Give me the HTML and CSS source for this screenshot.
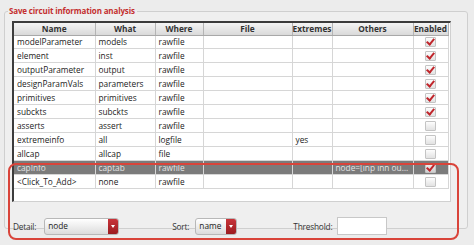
FILE: index.html
```html
<!DOCTYPE html>
<html>
<head>
    <title>Save circuit information analysis</title>
    <meta name="viewport" content="width=device-width, initial-scale=1.0">
    <link rel="stylesheet" href="styles.css">
</head>
<body>
<div class="panel">
    <fieldset class="group">
        <legend class="group-title">Save circuit information analysis</legend>

        <div class="viewport">
            <table class="grid">
                <colgroup>
                    <col class="c-name">
                    <col class="c-what">
                    <col class="c-where">
                    <col class="c-file">
                    <col class="c-ext">
                    <col class="c-others">
                    <col class="c-enabled">
                </colgroup>
                <tr>
                    <th>Name</th><th>What</th><th>Where</th><th>File</th><th>Extremes</th><th>Others</th><th>Enabled</th>
                </tr>
                <tr class="short"><td>modelParameter</td><td>models</td><td>rawfile</td><td></td><td></td><td></td><td class="en"><span class="cb on"></span></td></tr>
                <tr><td>element</td><td>inst</td><td>rawfile</td><td></td><td></td><td></td><td class="en"><span class="cb on"></span></td></tr>
                <tr><td>outputParameter</td><td>output</td><td>rawfile</td><td></td><td></td><td></td><td class="en"><span class="cb on"></span></td></tr>
                <tr><td>designParamVals</td><td>parameters</td><td>rawfile</td><td></td><td></td><td></td><td class="en"><span class="cb on"></span></td></tr>
                <tr><td>primitives</td><td>primitives</td><td>rawfile</td><td></td><td></td><td></td><td class="en"><span class="cb on"></span></td></tr>
                <tr><td>subckts</td><td>subckts</td><td>rawfile</td><td></td><td></td><td></td><td class="en"><span class="cb on"></span></td></tr>
                <tr><td>asserts</td><td>assert</td><td>rawfile</td><td></td><td></td><td></td><td class="en"><span class="cb"></span></td></tr>
                <tr><td>extremeinfo</td><td>all</td><td>logfile</td><td></td><td>yes</td><td></td><td class="en"><span class="cb"></span></td></tr>
                <tr><td>allcap</td><td>allcap</td><td>file</td><td></td><td></td><td></td><td class="en"><span class="cb"></span></td></tr>
                <tr class="selected"><td>capInfo</td><td>captab</td><td>rawfile</td><td></td><td></td><td>node=[inp inn out...</td><td class="en"><span class="cb on"></span></td></tr>
                <tr><td>&lt;Click_To_Add&gt;</td><td>none</td><td>rawfile</td><td></td><td></td><td></td><td class="en"><span class="cb"></span></td></tr>
            </table>
        </div>

        <div class="controls">
            <label class="lbl">Detail:</label>
            <div class="select detail"><span class="val">node</span><span class="arrow"></span></div>
            <label class="lbl sort-lbl">Sort:</label>
            <div class="select sort"><span class="val">name</span><span class="arrow"></span></div>
            <label class="lbl thr-lbl">Threshold:</label>
            <input class="thr" type="text">
        </div>
    </fieldset>

    <!-- annotation frame -->
    <div class="mark"></div>
</div>
</body>
</html>
```

FILE: styles.css
```css
body {
    margin: 0;
    background-color: #ececec;
    font-family: "Open Sans", sans-serif;
    font-size: 8.3px;
    color: #222;
}
.panel {
    position: relative;
    width: 474px;
    height: 245px;
}
.group {
    margin: 5px 6px 0 4px;
    padding: 0 0 0 7px;
    height: 222px;
    border: 1px solid #cfcfcf;
    border-radius: 3px;
    background-color: #efefef;
}
.group-title {
    margin-left: -4px;
    padding: 0 2px 0 1px;
    font-weight: bold;
    font-size: 8px;
    letter-spacing: -0.15px;
    color: #c42f2f;
    line-height: 12px;
}
.viewport {
    margin-top: 4px;
    width: 436px;
    height: 178px;
    background-color: #fff;
    border-top: 2px solid #3c3c3c;
    border-left: 2px solid #3c3c3c;
    border-right: 1px solid #d0d0d0;
    border-bottom: 1px solid #d0d0d0;
}
.grid {
    border-collapse: collapse;
    table-layout: fixed;
    width: 434px;
}
.c-name { width: 81px; }
.c-what { width: 60px; }
.c-where { width: 48px; }
.c-file { width: 89px; }
.c-ext { width: 40px; }
.c-others { width: 81px; }
.c-enabled { width: 35px; }
th {
    padding: 0;
    font-weight: bold;
    text-align: center;
    line-height: 12px;
    white-space: nowrap;
    background: linear-gradient(#f4f4f4, #d9d9d9);
    border-right: 1px solid #b4b4b4;
    border-bottom: 1px solid #a8a8a8;
    color: #333;
}
td {
    padding: 0 3px;
    line-height: 13px;
    white-space: nowrap;
    overflow: hidden;
    text-overflow: ellipsis;
    border-right: 1px solid #d6d6d6;
    border-bottom: 1px solid #d6d6d6;
}
.short td {
    line-height: 12px;
}
td.en {
    padding: 0;
    line-height: 0;
}
.selected td {
    background-color: #7b7b7b;
    color: #e4e4e4;
}
.cb {
    display: block;
    position: relative;
    width: 9px;
    height: 8px;
    margin: 0 auto;
    border: 1px solid #c4c4c4;
    border-radius: 1px;
    background: linear-gradient(#fdfdfd, #e2e2e2);
}
.cb.on::after {
    content: "";
    position: absolute;
    left: 2px;
    top: -1px;
    width: 3px;
    height: 6px;
    border-right: 2px solid #c0262c;
    border-bottom: 2px solid #c0262c;
    transform: rotate(40deg);
}
.selected .cb {
    background: linear-gradient(#f0f0f0, #cfcfcf);
}
.controls {
    display: flex;
    align-items: center;
    height: 18px;
    margin-top: 15px;
    padding-left: 1px;
}
.lbl {
    color: #333;
    letter-spacing: -0.2px;
}
.select {
    display: flex;
    height: 15px;
    margin-left: 8px;
    border: 1px solid #b8b8b8;
    border-radius: 3px;
    background: linear-gradient(#ffffff, #dcdcdc);
    overflow: hidden;
}
.sort {
    margin-left: 6px;
    width: 40px;
}
.select .val {
    flex: 1;
    padding-left: 3px;
    line-height: 13px;
    color: #222;
}
.select .arrow {
    width: 10px;
    position: relative;
    background: linear-gradient(#c8343a, #9c1c20);
}
.select .arrow::after {
    content: "";
    position: absolute;
    left: 3px;
    top: 6px;
    border-left: 2px solid transparent;
    border-right: 2px solid transparent;
    border-top: 3px solid #fff;
}
.detail { width: 73px; }
.sort-lbl { margin-left: 53px; }
.thr-lbl { margin-left: 56px; }
.thr {
    width: 50px;
    height: 18px;
    margin-left: 5px;
    padding: 0;
    border: 1px solid #c8c8c8;
    background-color: #fff;
    box-sizing: border-box;
}
.mark {
    position: absolute;
    left: 8px;
    top: 158px;
    width: 447px;
    height: 73px;
    border: 2px solid #d9443a;
    border-radius: 8px;
}
```
